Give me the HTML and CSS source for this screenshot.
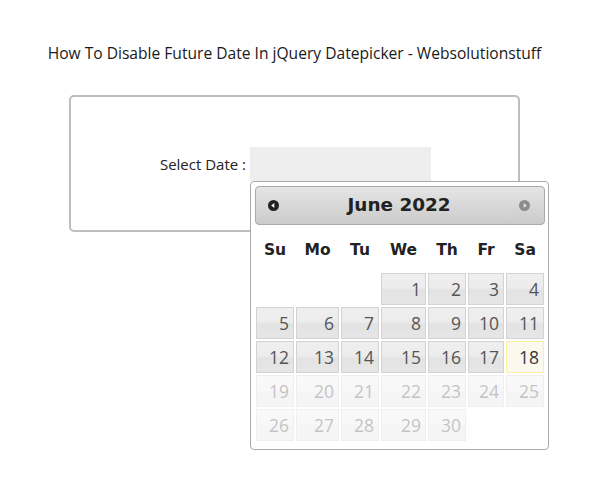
FILE: index.html
```html
<!DOCTYPE html>
<html lang="en">
<head>
<meta charset="utf-8">
<title>How To Disable Future Date In jQuery Datepicker - Websolutionstuff</title>
<link rel="stylesheet" href="styles.css">
</head>
<body>
<div class="page">
  <h1 class="title">How To Disable Future Date In jQuery Datepicker - Websolutionstuff</h1>
  <div class="card">
    <label class="label" for="datepicker">Select Date :</label>
    <div class="field">
      <input class="input" id="datepicker" type="text">
      <div class="datepicker">
        <div class="dp-header">
          <span class="dp-nav dp-prev" title="Prev">
            <svg width="11" height="11" viewBox="0 0 11 11"><circle cx="5.5" cy="5.5" r="5.5" fill="#222"/><polygon points="3.2,5.5 6.3,2.9 6.3,8.1" fill="#fff"/></svg>
          </span>
          <span class="dp-title">June 2022</span>
          <span class="dp-nav dp-next" title="Next">
            <svg width="11" height="11" viewBox="0 0 11 11"><circle cx="5.5" cy="5.5" r="5.5" fill="#8c8c8c"/><polygon points="7.8,5.5 4.7,2.9 4.7,8.1" fill="#e2e2e2"/></svg>
          </span>
        </div>
        <table class="dp-table">
          <colgroup>
            <col class="c40"><col class="c45"><col class="c40"><col class="c47"><col class="c40"><col class="c38"><col class="c40">
          </colgroup>
          <thead>
            <tr><th>Su</th><th>Mo</th><th>Tu</th><th>We</th><th>Th</th><th>Fr</th><th>Sa</th></tr>
          </thead>
          <tbody>
            <tr><td></td><td></td><td></td><td><a class="day">1</a></td><td><a class="day">2</a></td><td><a class="day">3</a></td><td><a class="day">4</a></td></tr>
            <tr><td><a class="day">5</a></td><td><a class="day">6</a></td><td><a class="day">7</a></td><td><a class="day">8</a></td><td><a class="day">9</a></td><td><a class="day">10</a></td><td><a class="day">11</a></td></tr>
            <tr><td><a class="day">12</a></td><td><a class="day">13</a></td><td><a class="day">14</a></td><td><a class="day">15</a></td><td><a class="day">16</a></td><td><a class="day">17</a></td><td><a class="day today">18</a></td></tr>
            <tr class="off"><td><span class="day">19</span></td><td><span class="day">20</span></td><td><span class="day">21</span></td><td><span class="day">22</span></td><td><span class="day">23</span></td><td><span class="day">24</span></td><td><span class="day">25</span></td></tr>
            <tr class="off"><td><span class="day">26</span></td><td><span class="day">27</span></td><td><span class="day">28</span></td><td><span class="day">29</span></td><td><span class="day">30</span></td><td></td><td></td></tr>
          </tbody>
        </table>
      </div>
    </div>
  </div>
</div>
</body>
</html>
```
FILE: styles.css
```css
html, body {
  margin: 0;
  padding: 0;
  background: #fff;
}
body {
  min-height: 483px;
  font-family: "Open Sans", "Noto Sans", sans-serif;
  color: #222;
  overflow: visible;
}
.page {
  width: 451px;
  margin: 0 auto;
  padding-top: 43px;
  overflow: visible;
}
.title {
  margin: 0 -80px;
  font-size: 15.6px;
  font-weight: normal;
  line-height: 20px;
  text-align: center;
  color: #1a1a1a;
}
.card {
  margin-top: 32px;
  height: 137px;
  box-sizing: border-box;
  border: 2px solid #bdbdbd;
  border-radius: 5px;
  display: flex;
  align-items: center;
  justify-content: center;
  padding-left: 2px;
  overflow: visible;
}
.label {
  font-size: 15px;
  color: #222;
  margin-right: 4px;
}
.field {
  position: relative;
  overflow: visible;
}
.input {
  display: block;
  width: 181px;
  height: 34px;
  box-sizing: border-box;
  border: none;
  background: #eeeeee;
  outline: none;
}
.datepicker {
  position: absolute;
  top: 100%;
  left: 0;
  width: 299px;
  box-sizing: border-box;
  padding: 4px 3px 0 4px;
  border: 1px solid #aaaaaa;
  border-radius: 4px;
  background: #fff;
  z-index: 2;
}
.dp-header {
  height: 39px;
  box-sizing: border-box;
  border: 1px solid #aaaaaa;
  border-radius: 4px;
  background: linear-gradient(#e5e5e5, #cbcbcb);
  display: flex;
  align-items: center;
  padding: 0 14px 0 12px;
}
.dp-nav {
  display: flex;
  width: 11px;
  height: 11px;
}
.dp-title {
  flex: 1;
  text-align: center;
  font-family: "DejaVu Sans", Verdana, sans-serif;
  font-weight: bold;
  font-size: 18.4px;
  color: #222;
  line-height: 22px;
}
.dp-table {
  width: 290px;
  table-layout: fixed;
  border-collapse: collapse;
  margin: 0 0 7px;
}
.c40 { width: 40px; }
.c45 { width: 45px; }
.c47 { width: 47px; }
.c38 { width: 38px; }
.dp-table th {
  height: 47px;
  box-sizing: border-box;
  padding: 4px 0 0;
  text-align: center;
  font-family: "DejaVu Sans", Verdana, sans-serif;
  font-weight: bold;
  font-size: 15.5px;
  color: #222;
}
.dp-table td {
  padding: 1px;
  height: 32px;
}
.day {
  display: block;
  height: 32px;
  box-sizing: border-box;
  border: 1px solid #d3d3d3;
  background: linear-gradient(#efefef 0%, #ececec 45%, #e3e3e3 55%, #e6e6e6 100%);
  text-align: right;
  padding: 0 4px;
  line-height: 30px;
  font-size: 17.5px;
  color: #555;
}
.day.today {
  border-color: #fcefa1;
  background: #fbf9ee;
  color: #363636;
}
.off .day {
  opacity: 0.35;
}
```
